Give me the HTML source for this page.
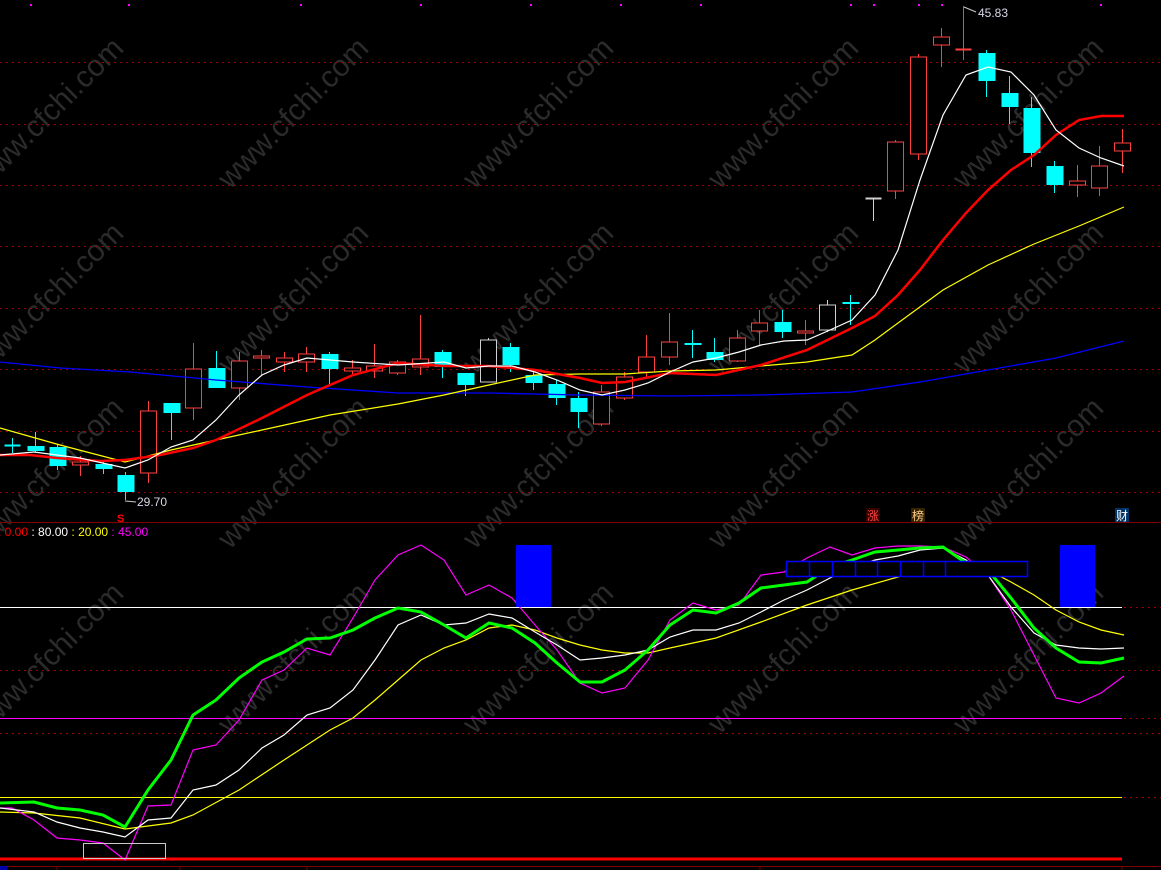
<!DOCTYPE html>
<html><head><meta charset="utf-8"><style>
html,body{margin:0;padding:0;background:#000;width:1161px;height:870px;overflow:hidden}
svg{display:block}
</style></head><body>
<svg id="s" width="1161" height="870" xmlns="http://www.w3.org/2000/svg" font-family="Liberation Sans, Noto Sans CJK SC, sans-serif">
<rect width="1161" height="870" fill="#000"/>
<g id="wm" fill="#2b2b2b" font-size="30"></g>
<g id="grid"></g>
<g id="cand"></g>
<g id="lines" fill="none"></g>
<rect x="516" y="545" width="35" height="62" fill="#0000ff"/>
<rect x="1060" y="545" width="35" height="62" fill="#0000ff"/>
<rect x="83.5" y="843.5" width="82" height="15" fill="none" stroke="#c8c8c8"/>
<g id="box" fill="none" stroke="#0000ff" stroke-width="1.5"></g>
<text x="978" y="17" fill="#d8d8e8" font-size="12">45.83</text>
<path d="M964 7 L976 12" stroke="#ccc" fill="none"/>
<text x="137" y="506" fill="#d8d8e8" font-size="12">29.70</text>
<path d="M125 501 L136 502" stroke="#ccc" fill="none"/>
<text x="117" y="522" fill="#f00" font-size="11" font-weight="bold">S</text>
<rect x="866" y="508" width="14" height="14" fill="#300"/>
<text x="867" y="520" fill="#f44" font-size="12">涨</text>
<rect x="911" y="508" width="14" height="14" fill="#320"/>
<text x="912" y="520" fill="#fc8" font-size="12">榜</text>
<rect x="1115" y="508" width="14" height="14" fill="#036"/>
<text x="1116" y="520" fill="#fff" font-size="12">财</text>
<text x="-2" y="536" font-size="12"><tspan fill="#f00">: 0.00</tspan><tspan fill="#fff"> : 80.00</tspan><tspan fill="#ff0"> : 20.00</tspan><tspan fill="#f0f"> : 45.00</tspan></text>
</svg>
<script>
var NS="http://www.w3.org/2000/svg";
function el(p,t,a){var e=document.createElementNS(NS,t);for(var k in a)e.setAttribute(k,a[k]);p.appendChild(e);return e;}
var g=document.getElementById('grid');
[62,124,185,246,308,369,431,492].forEach(function(y){el(g,'line',{x1:0,x2:1161,y1:y+.5,y2:y+.5,stroke:'#a00000','stroke-dasharray':'2 4'});});
[670,733].forEach(function(y){el(g,'line',{x1:0,x2:1161,y1:y+.5,y2:y+.5,stroke:'#a00000','stroke-dasharray':'2 4'});});
[607,718,797].forEach(function(y){el(g,'line',{x1:1124,x2:1161,y1:y+.5,y2:y+.5,stroke:'#a00000','stroke-dasharray':'2 4'});});
el(g,'line',{x1:0,x2:1161,y1:522.5,y2:522.5,stroke:'#800000'});
el(g,'line',{x1:0,x2:1122,y1:607.5,y2:607.5,stroke:'#fff'});
el(g,'line',{x1:0,x2:1122,y1:718.5,y2:718.5,stroke:'#f0f'});
el(g,'line',{x1:0,x2:1122,y1:797.5,y2:797.5,stroke:'#ff0'});
el(g,'line',{x1:0,x2:1122,y1:859,y2:859,stroke:'#f00','stroke-width':3});
el(g,'line',{x1:0,x2:1161,y1:866.5,y2:866.5,stroke:'#800000'});
el(g,'rect',{x:0,y:866,width:7,height:4,fill:'#00a'});
[57,180,307,760,1122].forEach(function(x){el(g,'line',{x1:x,x2:x,y1:866,y2:870,stroke:'#800000'});});
[30,128,300,420,530,620,700,850,873,918,941,1100].forEach(function(x){el(g,'rect',{x:x,y:4,width:2,height:2,fill:'#f0f'});});
var wm=document.getElementById('wm');
[[55,120],[300,120],[545,120],[790,120],[1035,120],[55,305],[300,305],[545,305],[790,305],[1035,305],[55,480],[300,480],[545,480],[790,480],[1035,480],[55,665],[300,665],[545,665],[790,665],[1035,665]].forEach(function(p){var t=el(wm,'text',{x:p[0],y:p[1],'text-anchor':'middle',transform:'rotate(-45 '+p[0]+' '+p[1]+')'});t.textContent='www.cfchi.com';});
// candles: [top,bottom,high,low,type] type r=red hollow c=cyan w=white
var C=[[445,445,438,453,'c'],[446,451,432,452,'c'],[447,466,444,470,'c'],[462,465,456,476,'r'],[464,469,460,474,'c'],[475,492,472,500,'c'],[411,473,401,483,'r'],[403,413,403,440,'c'],[369,408,343,420,'r'],[368,388,351,388,'c'],[361,388,352,400,'r'],[356,358,350,375,'r'],[358,362,352,372,'r'],[354,362,347,372,'r'],[354,369,352,385,'c'],[368,371,360,375,'r'],[366,371,344,378,'r'],[362,373,360,375,'r'],[359,367,315,375,'r'],[352,367,350,378,'c'],[373,385,373,396,'c'],[340,382,338,382,'w'],[347,365,343,372,'c'],[375,383,370,390,'c'],[384,398,380,405,'c'],[398,412,392,428,'c'],[392,424,385,426,'r'],[377,398,372,400,'r'],[357,372,335,378,'r'],[342,357,313,365,'r'],[343,345,330,358,'c'],[352,360,338,362,'c'],[338,361,330,362,'r'],[323,331,310,345,'r'],[322,332,310,338,'c'],[331,333,320,345,'r'],[305,330,300,332,'w'],[302,304,295,325,'c'],[198,198,198,221,'w'],[142,191,140,199,'r'],[57,154,54,160,'r'],[37,45,28,67,'r'],[49,49,6,60,'r'],[53,81,50,97,'c'],[93,107,76,124,'c'],[108,153,97,167,'c'],[166,185,161,193,'c'],[181,185,165,197,'r'],[166,188,146,196,'r'],[143,151,129,173,'r']];
var cg=document.getElementById('cand');
C.forEach(function(d,i){var x=Math.round(12+i*22.65)+.5;var col=d[4]=='r'?'#ff4040':d[4]=='c'?'#00ffff':'#d0d0d0';
el(cg,'line',{x1:x,x2:x,y1:d[2],y2:d[3],stroke:col});
if(d[1]-d[0]<2){el(cg,'line',{x1:x-8,x2:x+8,y1:d[0]+.5,y2:d[0]+.5,stroke:col,'stroke-width':2});}
else if(d[4]=='c'){el(cg,'rect',{x:x-8,y:d[0],width:17,height:d[1]-d[0],fill:col});}
else{el(cg,'rect',{x:x-8,y:d[0],width:16,height:d[1]-d[0],fill:'#000',stroke:col});}
});
var L=document.getElementById('lines');
function pl(pts,col,w){el(L,'polyline',{points:pts.map(function(p){return p.join(',')}).join(' '),stroke:col,'stroke-width':w});}
pl([[0,362],[60,368],[130,372],[216,380],[307,387],[398,393],[489,393],[580,395],[670,396],[761,395],[852,392],[920,382],[988,370],[1056,358],[1124,341]],'#0000ff',1.3);
pl([[0,428],[60,445],[125,462],[171,450],[216,440],[262,430],[330,415],[398,404],[444,395],[489,385],[535,375],[580,374],[625,374],[670,371],[716,370],[761,366],[807,362],[852,355],[875,340],[898,323],[943,290],[988,265],[1034,244],[1079,226],[1124,207]],'#ffff00',1.2);
pl([[0,455],[30,455],[57,458],[100,461],[125,460],[160,455],[193,448],[216,440],[262,418],[307,395],[353,375],[398,363],[444,366],[489,366],[535,370],[580,378],[602,383],[625,382],[670,373],[716,375],[761,365],[807,350],[852,328],[875,316],[898,295],[920,270],[943,240],[966,213],[988,190],[1011,170],[1034,155],[1056,135],[1079,120],[1101,116],[1124,116]],'#ff0000',2.5);
pl([[0,455],[34,452],[80,458],[125,468],[148,460],[171,447],[193,440],[216,420],[239,395],[262,375],[284,365],[307,358],[330,360],[353,362],[398,365],[444,362],[466,368],[489,366],[512,366],[535,372],[557,380],[580,390],[602,395],[625,390],[648,383],[670,372],[693,362],[716,358],[739,352],[761,345],[784,341],[807,340],[830,330],[852,320],[875,295],[898,250],[920,180],[943,115],[966,75],[988,67],[1011,72],[1034,95],[1056,130],[1079,148],[1101,158],[1124,166]],'#ffffff',1.2);
// indicator
pl([[0,812],[34,813],[80,818],[125,829],[148,826],[171,823],[193,815],[239,790],[284,760],[330,730],[353,718],[375,700],[398,680],[421,660],[444,648],[466,640],[489,628],[512,625],[535,630],[557,638],[580,645],[602,650],[625,653],[648,653],[670,648],[716,638],[761,622],[807,605],[852,590],[898,577],[943,565],[988,570],[1011,582],[1034,595],[1056,610],[1079,622],[1101,630],[1124,635]],'#ffff00',1.2);
pl([[0,808],[12,808],[34,820],[57,838],[80,840],[103,843],[125,860],[148,806],[171,805],[193,750],[216,745],[239,720],[262,680],[284,670],[307,648],[330,655],[353,618],[375,580],[398,555],[421,545],[444,560],[466,595],[489,585],[512,598],[535,625],[557,650],[580,683],[602,693],[625,688],[648,660],[670,620],[693,603],[716,610],[739,605],[761,575],[784,572],[807,558],[830,547],[852,555],[875,548],[898,546],[920,546],[943,547],[966,557],[988,575],[1011,610],[1034,655],[1056,698],[1079,703],[1101,693],[1124,676]],'#ff00ff',1.2);
pl([[0,808],[34,812],[57,822],[80,828],[103,832],[125,837],[148,820],[171,818],[193,790],[216,785],[239,770],[262,748],[284,735],[307,715],[330,708],[353,690],[375,660],[398,625],[421,615],[444,625],[466,623],[489,614],[512,618],[535,632],[557,645],[580,660],[602,658],[625,655],[648,650],[670,637],[693,630],[716,630],[739,623],[761,612],[784,600],[807,590],[830,578],[852,568],[875,560],[898,556],[920,550],[943,548],[966,560],[988,575],[1011,607],[1034,633],[1056,645],[1079,648],[1101,649],[1124,648]],'#ffffff',1.2);
pl([[0,803],[34,802],[57,808],[80,810],[103,815],[125,827],[148,790],[171,760],[193,715],[216,700],[239,678],[262,662],[284,652],[307,639],[330,638],[353,630],[375,618],[398,608],[421,612],[444,625],[466,638],[489,623],[512,628],[535,643],[557,663],[580,682],[602,682],[625,670],[648,650],[670,625],[693,610],[716,613],[739,603],[761,588],[784,585],[807,582],[830,567],[852,560],[875,552],[898,550],[920,548],[943,547],[966,563],[988,570],[1011,598],[1034,628],[1056,648],[1079,662],[1101,663],[1124,658]],'#00ff00',3);
var b=document.getElementById('box');
el(b,'rect',{x:786.5,y:561.5,width:241,height:15,fill:'#000'});
[809,832,855,877,900,923,945].forEach(function(x){el(b,'line',{x1:x+.5,x2:x+.5,y1:561,y2:577});});
</script>
</body></html>
